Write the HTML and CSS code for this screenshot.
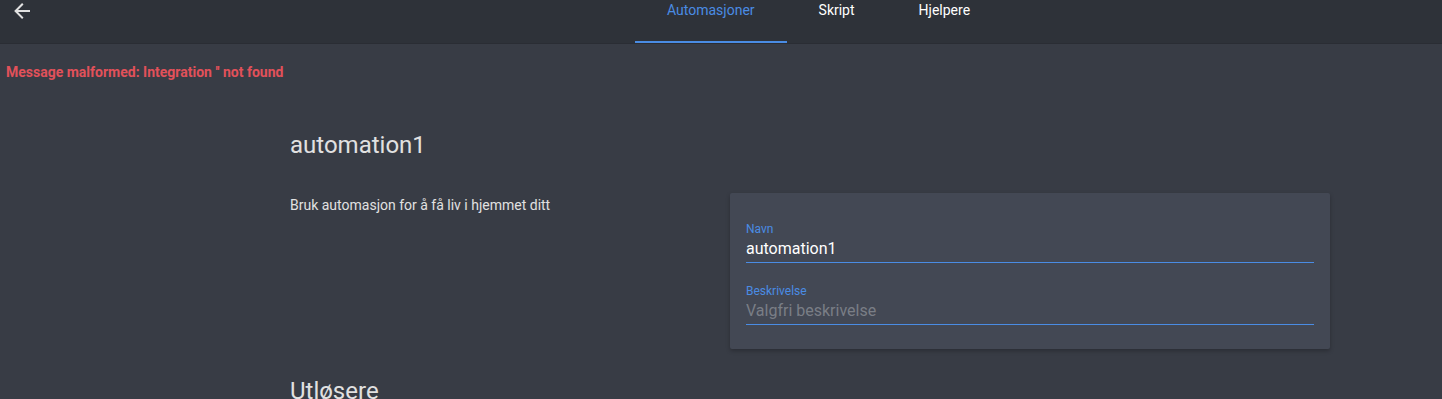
FILE: index.html
```html
<!DOCTYPE html>
<html>
<head>
    <title>Automasjoner</title>
    <meta name="viewport" content="width=device-width, initial-scale=1">
    <link rel="stylesheet" href="styles.css">
</head>
<body>
    <header class="toolbar">
        <button class="back-btn" type="button" aria-label="Tilbake">
            <svg width="24" height="24" viewBox="0 0 24 24">
                <path d="M20,11V13H8L13.5,18.5L12.08,19.92L4.16,12L12.08,4.08L13.5,5.5L8,11H20Z" fill="#e1e1e1"/>
            </svg>
        </button>
        <nav class="tabs">
            <a class="tab active" href="#">Automasjoner</a>
            <a class="tab" href="#">Skript</a>
            <a class="tab" href="#">Hjelpere</a>
        </nav>
    </header>

    <div class="error">Message malformed: Integration '' not found</div>

    <main class="section">
        <h1 class="title">automation1</h1>
        <div class="row">
            <div class="intro">Bruk automasjon for å få liv i hjemmet ditt</div>
            <div class="card">
                <div class="field">
                    <label class="field-label">Navn</label>
                    <input class="field-input" type="text" value="automation1">
                </div>
                <div class="field">
                    <label class="field-label">Beskrivelse</label>
                    <input class="field-input" type="text" placeholder="Valgfri beskrivelse">
                </div>
            </div>
        </div>
        <h2 class="title sub">Utløsere</h2>
    </main>
</body>
</html>
```

FILE: styles.css
```css
body {
    margin: 0;
    padding: 0;
    font-family: Roboto, "Noto Sans", sans-serif;
    background-color: #383c45;
    color: #e1e1e1;
    overflow: hidden;
}

.toolbar {
    display: flex;
    align-items: stretch;
    height: 43px;
    background-color: #2e3239;
    border-bottom: 1px solid #2a2d34;
}

.back-btn {
    width: 44px;
    height: 22px;
    padding: 0;
    background: none;
    border: none;
    display: flex;
    align-items: center;
    justify-content: center;
    cursor: pointer;
}

.tabs {
    display: flex;
    margin-left: 591px;
}

.tab {
    padding: 2px 32px 0;
    font-size: 14px;
    color: #ffffff;
    text-decoration: none;
    line-height: 16px;
    border-bottom: 2px solid transparent;
}

.tab.active {
    color: #4a8ce4;
    border-bottom-color: #4a8ce4;
}

.error {
    padding: 19px 6px 0;
    font-size: 14px;
    font-weight: bold;
    color: #e2515a;
    line-height: 18px;
}

.section {
    width: 1040px;
    margin-left: 290px;
}

.title {
    margin: 48px 0 0;
    font-size: 24px;
    font-weight: 400;
    line-height: 32px;
    color: #e1e1e1;
}

.title.sub {
    margin-top: 26px;
}

.row {
    display: flex;
    margin-top: 32px;
}

.intro {
    width: 440px;
    padding-top: 2px;
    font-size: 14px;
    line-height: 20px;
    color: #e1e1e1;
}

.card {
    width: 600px;
    box-sizing: border-box;
    padding: 29px 16px 24px;
    background-color: #434854;
    border-radius: 2px;
    box-shadow: 0 2px 4px rgba(0, 0, 0, 0.25);
}

.field {
    display: flex;
    flex-direction: column;
    margin-bottom: 21px;
}

.field:last-child {
    margin-bottom: 0;
}

.field-label {
    font-size: 12px;
    line-height: 14px;
    color: #4a8ce4;
}

.field-input {
    margin: 0;
    padding: 3px 0 3px 0;
    font-family: Roboto, "Noto Sans", sans-serif;
    font-size: 16px;
    line-height: 20px;
    color: #ffffff;
    background: none;
    border: none;
    border-bottom: 1px solid #4a8ce4;
    outline: none;
}

.field-input::placeholder {
    color: #7a7e86;
}
```
